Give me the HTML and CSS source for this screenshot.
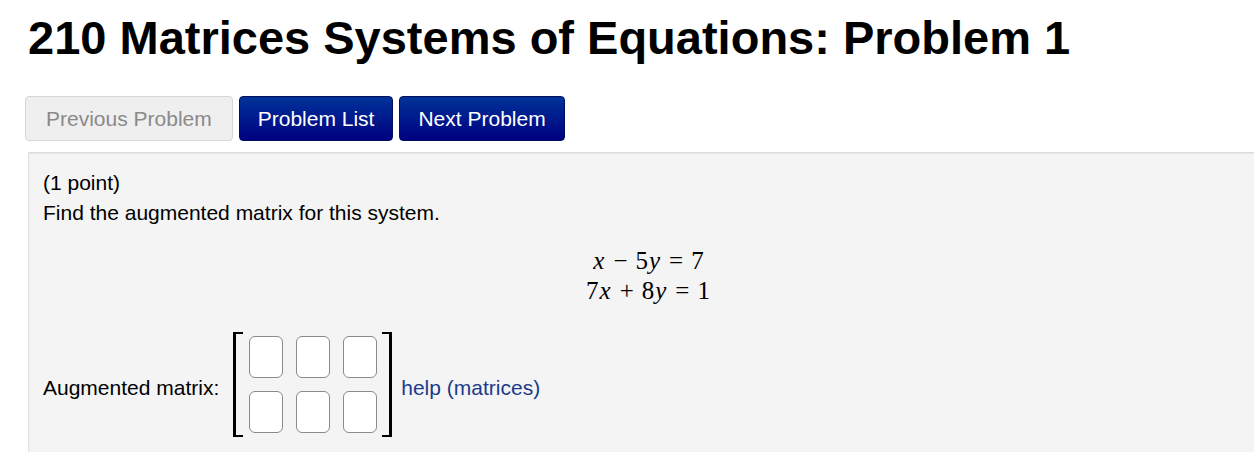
FILE: index.html
```html
<!DOCTYPE html>
<html lang="en">
<head>
  <meta charset="UTF-8" />
  <title>210 Matrices Systems of Equations: Problem 1</title>
  <link rel="stylesheet" href="styles.css">
</head>
<body>
  <h1 class="page-title">210 Matrices Systems of Equations: Problem 1</h1>

  <div class="nav-buttons">
    <button class="nav-btn disabled">Previous Problem</button>
    <button class="nav-btn">Problem List</button>
    <button class="nav-btn">Next Problem</button>
  </div>

  <div class="problem">
    <p class="line">(1 point)</p>
    <p class="line">Find the augmented matrix for this system.</p>

    <div class="system">
      <div class="eq"><i>x</i><span class="op">&minus;</span>5<i>y</i><span class="op">=</span>7</div>
      <div class="eq">7<i>x</i><span class="op">+</span>8<i>y</i><span class="op">=</span>1</div>
    </div>

    <div class="answer-row">
      <span class="label">Augmented matrix:</span>
      <div class="matrix">
        <div class="cells">
          <input type="text" class="cell" />
          <input type="text" class="cell" />
          <input type="text" class="cell" />
          <input type="text" class="cell" />
          <input type="text" class="cell" />
          <input type="text" class="cell" />
        </div>
      </div>
      <a class="help" href="#">help (matrices)</a>
    </div>
  </div>
</body>
</html>
```

FILE: styles.css
```css
body {
  margin: 0;
  padding: 0 0 0 28px;
  font-family: 'Liberation Sans', Arial, sans-serif;
  background: #fff;
  color: #000;
  overflow: hidden;
}

.page-title {
  margin: 0;
  padding-top: 11px;
  font-size: 47px;
  font-weight: bold;
  line-height: 54px;
}

.nav-buttons {
  display: flex;
  gap: 6px;
  margin-top: 31px;
  margin-left: -3px;
}

.nav-btn {
  height: 45px;
  padding: 0 18px;
  border: 1px solid #00105a;
  border-radius: 4px;
  font-family: 'Liberation Sans', Arial, sans-serif;
  font-size: 21px;
  color: #fff;
  background: linear-gradient(#003399, #000080);
  cursor: pointer;
}

.nav-btn.disabled {
  color: #8a8a8a;
  background: #efefef;
  border-color: #d6d6d6;
  padding: 0 20px;
}

.problem {
  margin-top: 11px;
  width: 1210px;
  padding: 15px 14px 20px;
  background: #f4f4f4;
  border-top: 1px solid #dcdcdc;
  border-left: 1px solid #e2e2e2;
  box-shadow: inset 0 1px 2px rgba(0,0,0,0.06);
  font-size: 21px;
}

.line {
  margin: 0;
  line-height: 30px;
}

.system {
  margin: 18px 0 26px;
  font-family: 'Liberation Serif', 'Times New Roman', serif;
  font-size: 25px;
  line-height: 30px;
  text-align: center;
}

.eq i {
  font-style: italic;
  margin: 0 1px;
}

.op {
  margin: 0 8px;
}

.answer-row {
  display: flex;
  align-items: center;
}

.label,
.help {
  padding-top: 7px;
}

.label {
  margin-right: 14px;
}

.matrix {
  border-left: 3px solid #000;
  border-right: 3px solid #000;
  padding: 4px 12px 4px 13px;
  position: relative;
}

.matrix::before,
.matrix::after {
  content: "";
  position: absolute;
  top: 0;
  bottom: 0;
  width: 7px;
  border-top: 2px solid #000;
  border-bottom: 2px solid #000;
}

.matrix::before {
  left: 0;
}

.matrix::after {
  right: 0;
}

.cells {
  display: grid;
  grid-template-columns: repeat(3, 34px);
  gap: 13px 13px;
}

.cell {
  box-sizing: border-box;
  width: 34px;
  height: 42px;
  border: 1px solid #8a8a8a;
  border-radius: 6px;
  background: #fff;
  padding: 0;
}

.help {
  margin-left: 9px;
  color: #1b3b8b;
  text-decoration: none;
}
```
